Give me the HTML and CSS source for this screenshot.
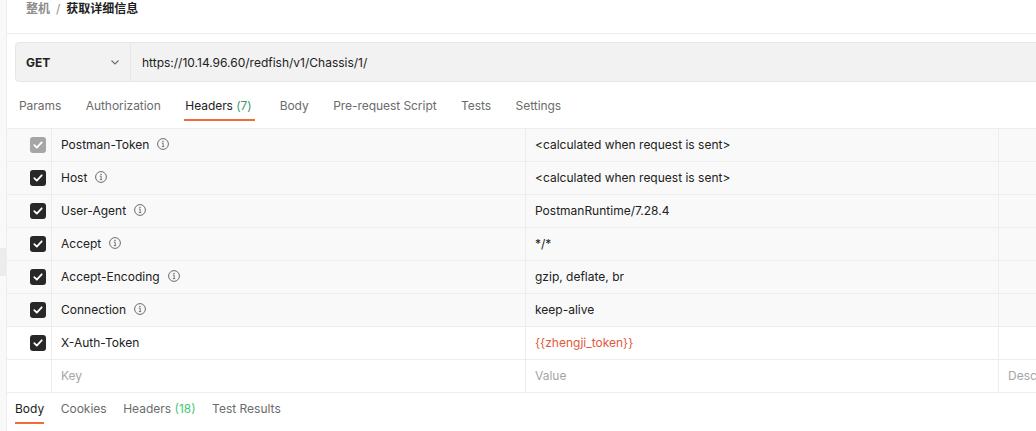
FILE: index.html
```html
<!DOCTYPE html>
<html>
<head>
<meta charset="utf-8">
<link rel="stylesheet" href="styles.css">
</head>
<body>
<div class="app">
  <div class="side"><div class="thumb"></div></div>
  <div class="main">
    <div class="crumbs"><span class="parent">整机</span><span class="sep">/</span><span class="current">获取详细信息</span></div>
    <div class="urlbar">
      <div class="method"><span>GET</span>
        <svg class="chev" width="12" height="12" viewBox="0 0 12 12"><path d="M2.5 4.5 L6 8 L9.5 4.5" fill="none" stroke="#6b6b6b" stroke-width="1.1"/></svg>
      </div>
      <div class="url">https://10.14.96.60/redfish/v1/Chassis/1/</div>
    </div>
    <div class="tabs">
      <div class="tab">Params</div>
      <div class="tab">Authorization</div>
      <div class="tab active">Headers <span class="count">(7)</span></div>
      <div class="tab">Body</div>
      <div class="tab">Pre-request Script</div>
      <div class="tab">Tests</div>
      <div class="tab">Settings</div>
    </div>
    <div class="table">
      <div class="row auto">
        <div class="c-check"><span class="cb dim"><svg width="10" height="8" viewBox="0 0 10 8"><path d="M1.3 4.2 L3.8 6.6 L8.7 1.3" fill="none" stroke="#fff" stroke-width="1.8" stroke-linecap="round" stroke-linejoin="round"/></svg></span></div>
        <div class="c-key">Postman-Token<svg class="info" width="12" height="12" viewBox="0 0 12 12"><circle cx="6" cy="6" r="5.4" fill="none" stroke="#6b6b6b" stroke-width="1"/><circle cx="6" cy="3.6" r="0.75" fill="#6b6b6b"/><path d="M4.8 5.2 H6.2 V8.6 M4.8 8.6 H7.2" fill="none" stroke="#6b6b6b" stroke-width="0.9"/></svg></div>
        <div class="c-val">&lt;calculated when request is sent&gt;</div>
        <div class="c-desc"></div>
      </div>
      <div class="row auto">
        <div class="c-check"><span class="cb"><svg width="10" height="8" viewBox="0 0 10 8"><path d="M1.3 4.2 L3.8 6.6 L8.7 1.3" fill="none" stroke="#fff" stroke-width="1.8" stroke-linecap="round" stroke-linejoin="round"/></svg></span></div>
        <div class="c-key">Host<svg class="info" width="12" height="12" viewBox="0 0 12 12"><circle cx="6" cy="6" r="5.4" fill="none" stroke="#6b6b6b" stroke-width="1"/><circle cx="6" cy="3.6" r="0.75" fill="#6b6b6b"/><path d="M4.8 5.2 H6.2 V8.6 M4.8 8.6 H7.2" fill="none" stroke="#6b6b6b" stroke-width="0.9"/></svg></div>
        <div class="c-val">&lt;calculated when request is sent&gt;</div>
        <div class="c-desc"></div>
      </div>
      <div class="row auto">
        <div class="c-check"><span class="cb"><svg width="10" height="8" viewBox="0 0 10 8"><path d="M1.3 4.2 L3.8 6.6 L8.7 1.3" fill="none" stroke="#fff" stroke-width="1.8" stroke-linecap="round" stroke-linejoin="round"/></svg></span></div>
        <div class="c-key">User-Agent<svg class="info" width="12" height="12" viewBox="0 0 12 12"><circle cx="6" cy="6" r="5.4" fill="none" stroke="#6b6b6b" stroke-width="1"/><circle cx="6" cy="3.6" r="0.75" fill="#6b6b6b"/><path d="M4.8 5.2 H6.2 V8.6 M4.8 8.6 H7.2" fill="none" stroke="#6b6b6b" stroke-width="0.9"/></svg></div>
        <div class="c-val">PostmanRuntime/7.28.4</div>
        <div class="c-desc"></div>
      </div>
      <div class="row auto">
        <div class="c-check"><span class="cb"><svg width="10" height="8" viewBox="0 0 10 8"><path d="M1.3 4.2 L3.8 6.6 L8.7 1.3" fill="none" stroke="#fff" stroke-width="1.8" stroke-linecap="round" stroke-linejoin="round"/></svg></span></div>
        <div class="c-key">Accept<svg class="info" width="12" height="12" viewBox="0 0 12 12"><circle cx="6" cy="6" r="5.4" fill="none" stroke="#6b6b6b" stroke-width="1"/><circle cx="6" cy="3.6" r="0.75" fill="#6b6b6b"/><path d="M4.8 5.2 H6.2 V8.6 M4.8 8.6 H7.2" fill="none" stroke="#6b6b6b" stroke-width="0.9"/></svg></div>
        <div class="c-val">*/*</div>
        <div class="c-desc"></div>
      </div>
      <div class="row auto">
        <div class="c-check"><span class="cb"><svg width="10" height="8" viewBox="0 0 10 8"><path d="M1.3 4.2 L3.8 6.6 L8.7 1.3" fill="none" stroke="#fff" stroke-width="1.8" stroke-linecap="round" stroke-linejoin="round"/></svg></span></div>
        <div class="c-key">Accept-Encoding<svg class="info" width="12" height="12" viewBox="0 0 12 12"><circle cx="6" cy="6" r="5.4" fill="none" stroke="#6b6b6b" stroke-width="1"/><circle cx="6" cy="3.6" r="0.75" fill="#6b6b6b"/><path d="M4.8 5.2 H6.2 V8.6 M4.8 8.6 H7.2" fill="none" stroke="#6b6b6b" stroke-width="0.9"/></svg></div>
        <div class="c-val">gzip, deflate, br</div>
        <div class="c-desc"></div>
      </div>
      <div class="row auto">
        <div class="c-check"><span class="cb"><svg width="10" height="8" viewBox="0 0 10 8"><path d="M1.3 4.2 L3.8 6.6 L8.7 1.3" fill="none" stroke="#fff" stroke-width="1.8" stroke-linecap="round" stroke-linejoin="round"/></svg></span></div>
        <div class="c-key">Connection<svg class="info" width="12" height="12" viewBox="0 0 12 12"><circle cx="6" cy="6" r="5.4" fill="none" stroke="#6b6b6b" stroke-width="1"/><circle cx="6" cy="3.6" r="0.75" fill="#6b6b6b"/><path d="M4.8 5.2 H6.2 V8.6 M4.8 8.6 H7.2" fill="none" stroke="#6b6b6b" stroke-width="0.9"/></svg></div>
        <div class="c-val">keep-alive</div>
        <div class="c-desc"></div>
      </div>
      <div class="row">
        <div class="c-check"><span class="cb"><svg width="10" height="8" viewBox="0 0 10 8"><path d="M1.3 4.2 L3.8 6.6 L8.7 1.3" fill="none" stroke="#fff" stroke-width="1.8" stroke-linecap="round" stroke-linejoin="round"/></svg></span></div>
        <div class="c-key">X-Auth-Token</div>
        <div class="c-val var">{{zhengji_token}}</div>
        <div class="c-desc"></div>
      </div>
      <div class="row">
        <div class="c-check"></div>
        <div class="c-key ph">Key</div>
        <div class="c-val ph">Value</div>
        <div class="c-desc ph">Description</div>
      </div>
    </div>
    <div class="tabs bottom">
      <div class="tab active">Body</div>
      <div class="tab">Cookies</div>
      <div class="tab">Headers <span class="count green">(18)</span></div>
      <div class="tab">Test Results</div>
    </div>
  </div>
</div>
</body>
</html>
```

FILE: styles.css
```css
* { box-sizing: border-box; }
html, body { margin: 0; padding: 0; background: #fff; }
body {
  font-family: Inter, "Noto Sans CJK SC", "Noto Sans", sans-serif;
  font-size: 12px;
  color: #212121;
  width: 1036px;
  height: 431px;
  overflow: hidden;
}
.app { display: flex; height: 431px; }
.side {
  width: 7px;
  flex: none;
  background: #f9f9f9;
  border-right: 1px solid #ededed;
  position: relative;
}
.thumb {
  position: absolute;
  left: 0; top: 248px;
  width: 6px; height: 28px;
  background: #ececec;
}
.main { flex: 1; overflow: hidden; min-width: 0; }
.crumbs {
  height: 34px;
  border-bottom: 1px solid #ededed;
  padding-left: 19px;
  line-height: 18px;
  font-size: 12px;
  display: flex;
  gap: 6px;
}
.crumbs .parent { color: #8c8c8c; font-weight: 600; }
.crumbs .sep { color: #8c8c8c; }
.crumbs .current { color: #212121; font-weight: 700; }
.urlbar {
  margin: 8px 0 0 8px;
  width: 1100px;
  height: 40px;
  background: #f2f2f2;
  border: 1px solid #e6e6e6;
  border-radius: 4px;
  display: flex;
  align-items: center;
}
.method {
  width: 115px;
  height: 100%;
  border-right: 1px solid #e6e6e6;
  display: flex;
  align-items: center;
  justify-content: space-between;
  padding: 0 9px 0 10px;
  font-weight: 700;
  font-size: 12px;
  color: #212121;
}
.url { padding-left: 11px; color: #212121; }
.tabs {
  display: flex;
  height: 39px;
  margin-bottom: 7px;
  padding-left: 0;
}
.tab {
  position: relative;
  margin-left: 12px;
  margin-right: 12.5px;
  padding-top: 16px;
  line-height: 16px;
  color: #6b6b6b;
  white-space: nowrap;
}
.tabs:not(.bottom) .tab { letter-spacing: -0.05px; }
.tab.active { color: #212121; }
.tabs:not(.bottom) .tab.active { padding-right: 3.5px; }
.tab.active::after {
  content: "";
  position: absolute;
  left: -1px; right: 0;
  top: 37px;
  height: 2px;
  background: #f26b3a;
}
.count { color: #3d9b6a; }
.count.green { color: #0cbb52; opacity: 0.8; }
.table {
  width: 1200px;
  border-top: 1px solid #ededed;
}
.row {
  display: flex;
  height: 33px;
  border-bottom: 1px solid #ededed;
  background: #fff;
}
.row.auto { background: #f9f9f9; }
.row > div {
  display: flex;
  align-items: center;
  white-space: nowrap;
  padding-bottom: 2px;
}
.c-check {
  width: 45px;
  flex: none;
  border-right: 1px solid #ededed;
  justify-content: flex-start;
  padding-left: 23px;
}
.row > .c-check { padding-bottom: 0; }
.c-key {
  width: 474px;
  flex: none;
  border-right: 1px solid #ededed;
  padding-left: 9px;
}
.c-val {
  width: 473px;
  flex: none;
  border-right: 1px solid #ededed;
  padding-left: 9px;
}
.c-desc { flex: 1; padding-left: 9px; }
.ph { color: #a6a6a6; }
.var { color: #e0593d; }
.cb {
  width: 16px; height: 16px;
  border-radius: 3px;
  background: #282828;
  display: flex;
  align-items: center;
  justify-content: center;
}
.cb.dim { background: #a6a6a6; }
.info { margin-left: 8px; flex: none; }
.tabs.bottom { margin-bottom: 0; height: 32px; }
.tabs.bottom .tab {
  padding-top: 8px;
  margin-left: 8px;
  margin-right: 8.5px;
}
.tabs.bottom .tab.active::after { top: 29px; left: 0; right: 0; }
```
